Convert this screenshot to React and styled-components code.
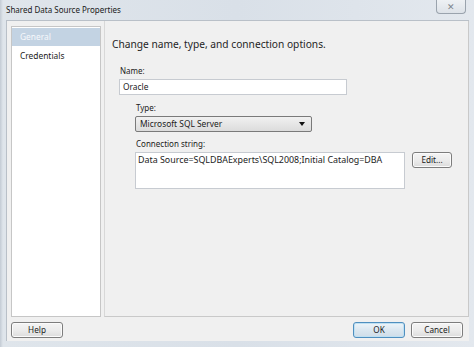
import React from "react";
import styled, { createGlobalStyle } from "styled-components";

const Global = createGlobalStyle`
  html, body {
    margin: 0;
    padding: 0;
    width: 474px;
    height: 347px;
    overflow: hidden;
    background: #d6dde5;
  }
  * { box-sizing: border-box; }
`;

const Window = styled.div`
  width: 474px;
  height: 347px;
  display: flex;
  flex-direction: column;
  background: linear-gradient(90deg, #c3cbd4 0px, #dfe5eb 3px, #d9e0e8 50%, #e3e8ee 100%);
  font-family: "Noto Sans", "Open Sans", sans-serif;
  color: #1b1b1b;
`;

const TitleBar = styled.div`
  height: 20px;
  display: flex;
  align-items: flex-start;
  justify-content: space-between;
  padding: 0 6px 0 6px;
`;

const Title = styled.span`
  font-size: 8px;
  line-height: 20px;
  color: #1a1a1a;
`;

const CloseButton = styled.div`
  width: 30px;
  height: 14px;
  margin-right: 2px;
  border: 1px solid #9aa3ad;
  border-top: none;
  border-radius: 0 0 4px 4px;
  background: linear-gradient(#eef1f4, #dde2e8);
  display: flex;
  align-items: center;
  justify-content: center;
  color: #7d848c;
  font-size: 9px;
  line-height: 1;
`;

const Client = styled.div`
  flex: 1;
  margin: 0 5px 0 6px;
  background: #f0f0f0;
  border-top: 1px solid #b9c0c8;
  border-left: 1px solid #b9c0c8;
  display: flex;
  flex-direction: column;
`;

const Body = styled.div`
  display: flex;
  height: 296px;
`;

const Nav = styled.div`
  width: 90px;
  margin: 5px 3px 0 4px;
  background: #ffffff;
  border: 1px solid #c6c6c6;
  padding: 1px 0 0 0;
`;

const NavItem = styled.div`
  height: 18px;
  padding-left: 8px;
  font-size: 8.4px;
  line-height: 18px;
  margin-bottom: 1px;
  color: ${(p) => (p.$active ? "#f6f8fb" : "#1b1b1b")};
  background: ${(p) => (p.$active ? "#c3d3e3" : "transparent")};
`;

const Content = styled.div`
  flex: 1;
  border-right: 1px solid #c9c9c9;
  border-bottom: 1px solid #c9c9c9;
  border-left: 1px solid #d8d8d8;
  padding: 16px 0 0 7px;
  display: flex;
  flex-direction: column;
`;

const Heading = styled.div`
  font-size: 10.2px;
  line-height: 15px;
  color: #1f1f1f;
  margin-bottom: 14px;
`;

const Section = styled.div`
  display: flex;
  flex-direction: column;
  padding-left: ${(p) => p.$indent || 0}px;
`;

const Label = styled.div`
  font-size: 8px;
  line-height: 10px;
  margin: ${(p) => p.$top || 0}px 0 3px 1px;
  color: #1b1b1b;
`;

const TextBox = styled.div`
  width: 228px;
  height: 16px;
  background: #fff;
  border: 1px solid #c7cbd1;
  font-size: 8.4px;
  line-height: 14px;
  padding-left: 3px;
`;

const Select = styled.div`
  width: 177px;
  height: 16px;
  border: 1px solid #7a7a7a;
  border-radius: 2px;
  background: linear-gradient(#f1f1f1, #dcdcdc);
  font-size: 8.4px;
  line-height: 14px;
  padding: 0 6px 0 4px;
  display: flex;
  justify-content: space-between;
  align-items: center;
`;

const Arrow = styled.span`
  width: 0;
  height: 0;
  border-left: 3px solid transparent;
  border-right: 3px solid transparent;
  border-top: 4px solid #111;
`;

const ConnRow = styled.div`
  display: flex;
  align-items: flex-start;
  gap: 7px;
`;

const TextArea = styled.div`
  width: 270px;
  height: 37px;
  background: #fff;
  border: 1px solid #c7cbd1;
  font-size: 8.9px;
  line-height: 12px;
  padding: 1px 0 0 2px;
  white-space: nowrap;
`;

const Button = styled.div`
  width: ${(p) => p.$w || 52}px;
  height: 16px;
  border: 1px solid ${(p) => (p.$default ? "#4f8fbf" : "#7d7d7d")};
  border-radius: 3px;
  background: ${(p) =>
    p.$default
      ? "linear-gradient(#eef5fa, #dbe7f0 50%, #cfdde8)"
      : "linear-gradient(#f4f4f4, #ececec 50%, #dcdcdc)"};
  box-shadow: inset 0 0 0 1px ${(p) => (p.$default ? "#bfe0f2" : "#fbfbfb")};
  font-size: 8.2px;
  line-height: 14px;
  text-align: center;
  color: #1b1b1b;
`;

const Footer = styled.div`
  display: flex;
  align-items: center;
  padding: 5px 6px 0 4px;
  gap: 6px;
`;

const Spacer = styled.div`
  flex: 1;
`;

const BottomFrame = styled.div`
  height: 6px;
`;

export default function App() {
  return (
    <>
      <Global />
      <Window>
        <TitleBar>
          <Title>Shared Data Source Properties</Title>
          <CloseButton>✕</CloseButton>
        </TitleBar>
        <Client>
          <Body>
            <Nav>
              <NavItem $active>General</NavItem>
              <NavItem>Credentials</NavItem>
            </Nav>
            <Content>
              <Heading>Change name, type, and connection options.</Heading>
              <Section $indent={7}>
                <Label>Name:</Label>
                <TextBox>Oracle</TextBox>
              </Section>
              <Section $indent={23}>
                <Label $top={8}>Type:</Label>
                <Select>
                  <span>Microsoft SQL Server</span>
                  <Arrow />
                </Select>
                <Label $top={7}>Connection string:</Label>
                <ConnRow>
                  <TextArea>Data Source=SQLDBAExperts\SQL2008;Initial Catalog=DBA</TextArea>
                  <Button $w={40}>Edit...</Button>
                </ConnRow>
              </Section>
            </Content>
          </Body>
          <Footer>
            <Button>Help</Button>
            <Spacer />
            <Button $default>OK</Button>
            <Button>Cancel</Button>
          </Footer>
        </Client>
        <BottomFrame />
      </Window>
    </>
  );
}
